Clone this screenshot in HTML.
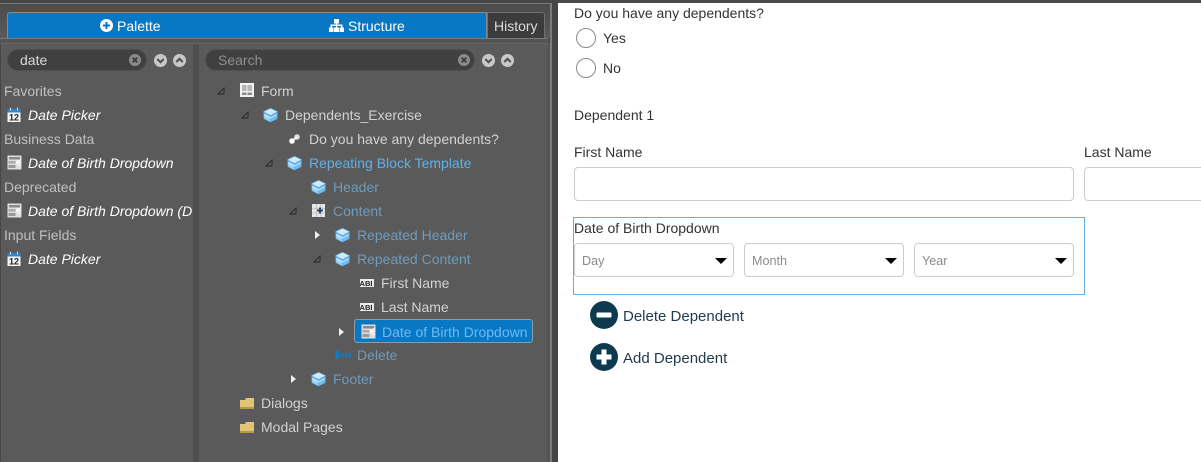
<!DOCTYPE html>
<html><head><meta charset="utf-8">
<style>
html,body{margin:0;padding:0}
body{width:1201px;height:462px;overflow:hidden;position:relative;background:#fff;font-family:"Liberation Sans",Arial,sans-serif;font-size:14px}
.a{position:absolute}
.t{position:absolute;white-space:nowrap;line-height:16px;color:#d2d2d2}
.g{color:#c0c0c0}
.i{color:#fff;font-style:italic}
.b{color:#6f9bbd}
.d{color:#333}
svg{position:absolute;overflow:visible}
.inp{position:absolute;box-sizing:border-box;background:#fff;border:1px solid #ccc;border-radius:4px}
.sel{position:absolute;box-sizing:border-box;width:160px;height:34px;top:243px;background:#fff;border:1px solid #ccc;border-radius:4px;color:#8a8a8a;font-size:12.6px;line-height:34px;padding-left:7px}
.sel i{position:absolute;right:6px;top:14px;width:0;height:0;border-left:6px solid transparent;border-right:6px solid transparent;border-top:6px solid #000}
.s{position:absolute;box-sizing:border-box;height:22px;top:49px;background:#404040;border:1px solid #505050;border-radius:11px;color:#d8d8d8;line-height:20px;padding-left:12px}
.tri{position:absolute;width:0;height:0;border-top:4px solid transparent;border-bottom:4px solid transparent;border-left:5px solid #f0f0f0}
</style></head><body>
<svg width="0" height="0" style="position:absolute"><defs>
<symbol id="cube" viewBox="0 0 16 16"><path d="M8 .5L15.500 4V12L8 15.800L.5 12V4Z" fill="#5fb0ea"/><path d="M8 1.200L14.800 4.500L8 8L1.200 4.500Z" fill="#d3ebfb"/><path d="M1.200 6.500L7.500 9.800V15L1.200 11.600Z" fill="#9ad2f6"/><path d="M8.500 9.800L14.800 6.500V11.600L8.500 15Z" fill="#74bdf0"/><path d="M1.200 7.500L8 11L14.800 7.500" stroke="#e8f5fd" stroke-width=".8" fill="none"/></symbol>
<symbol id="cal" viewBox="0 0 14 15"><rect x=".5" y="2" width="13" height="13" fill="#f4f4f4"/><rect x=".5" y="2" width="13" height="3.500" fill="#2a87cf"/><rect x="3" y=".5" width="1" height="3" fill="#ddd"/><rect x="10" y=".5" width="1" height="3" fill="#ddd"/><text x="7" y="13.500" text-anchor="middle" font-family="Liberation Sans" font-weight="bold" font-size="9" fill="#222">12</text></symbol>
<symbol id="dd" viewBox="0 0 15 15"><rect x=".5" y=".5" width="14" height="14" fill="#dedede"/><rect x="2" y="2" width="11" height="2.500" fill="#8a8a8a"/><rect x="1.500" y="6" width="7" height="2.500" fill="#ababab"/><rect x="1.500" y="10" width="7" height="3" fill="#999"/><path d="M9 7L14 4.500M9 7.500H14M9 8L14 11" stroke="#fff"/></symbol>
<symbol id="abl" viewBox="0 0 14 8"><rect width="14" height="8" fill="#eaeaea"/><text x="6" y="7" text-anchor="middle" font-family="Liberation Sans" font-weight="bold" font-size="7.500" fill="#222">ABI</text></symbol>
<symbol id="folder" viewBox="0 0 15 11"><path d="M0 2H5L6 0H14V11H0Z" fill="#e2c576"/><rect y="9" width="14" height="2" fill="#b8964a"/></symbol>
<symbol id="col" viewBox="0 0 8 8"><path d="M7 1V7H1Z" fill="none" stroke="#2b2b2b" stroke-width="1"/></symbol>
<symbol id="down" viewBox="0 0 13 13"><circle cx="6.500" cy="6.500" r="6.500" fill="#c8c8c8"/><path d="M3.300 5L6.500 8.200L9.700 5" stroke="#505050" stroke-width="2" fill="none"/></symbol>
<symbol id="up" viewBox="0 0 13 13"><circle cx="6.500" cy="6.500" r="6.500" fill="#c8c8c8"/><path d="M3.300 8L6.500 4.800L9.700 8" stroke="#505050" stroke-width="2" fill="none"/></symbol>
<symbol id="x" viewBox="0 0 13 13"><circle cx="6.500" cy="6.500" r="6.500" fill="#8a8a8a"/><path d="M4 4L9 9M9 4L4 9" stroke="#3d3d3d" stroke-width="2"/></symbol>
</defs></svg>

<!-- editor panel background -->
<div class="a" style="left:0;top:0;width:558px;height:462px;background:#464646"></div>
<div class="a" style="left:0;top:4px;width:550px;height:34px;background:linear-gradient(#4b4b4b,#5a5a5a)"></div>
<div class="a" style="left:0;top:3px;width:552px;height:1px;background:#7a7a7a"></div>
<div class="a" style="left:550px;top:3px;width:2px;height:459px;background:#7c7c7c"></div>
<div class="a" style="left:1px;top:43px;width:192px;height:419px;background:#5a5a5a"></div>
<div class="a" style="left:193px;top:43px;width:6px;height:419px;background:#4f4f4f"></div>
<div class="a" style="left:199px;top:43px;width:351px;height:419px;background:#5a5a5a"></div>
<div class="a" style="left:548px;top:38px;width:1px;height:424px;background:#4e4e4e"></div>
<div class="a" style="left:0;top:38px;width:548px;height:6px;background:#555;border-top:1px solid #7a7a7a;border-bottom:1px solid #656565;box-sizing:border-box"></div>

<!-- tabs -->
<div class="a" style="left:7px;top:12px;width:480px;height:26px;background:#0877c4;border:1px solid #8a8a8a;border-bottom:0;box-sizing:border-box;border-radius:3px 0 0 0"></div>
<div class="a" style="left:487px;top:12px;width:58px;height:26px;background:#3c3c3c;border:1px solid #707070;border-bottom:0;box-sizing:border-box;border-radius:0 3px 0 0"></div>
<svg style="left:100px;top:19px" width="13" height="13" viewBox="0 0 13 13"><circle cx="6.500" cy="6.500" r="6.500" fill="#fff"/><path d="M6.500 3V10M3 6.500H10" stroke="#0877c4" stroke-width="2"/></svg>
<div class="t" style="left:117px;top:18px;color:#fff">Palette</div>
<svg style="left:329px;top:19px" width="15" height="13" viewBox="0 0 15 13"><path d="M5 0H10V4.500H8.200V5.500H13.500V8.500H15V13H10.500V8.500H12V7H8.200V8.500H10V13H5V8.500H6.800V7H3V8.500H4.500V13H0V8.500H1.500V5.500H6.800V4.500H5Z" fill="#fff"/></svg>
<div class="t" style="left:348px;top:18px;color:#fff">Structure</div>
<div class="t" style="left:494px;top:18px;color:#dcdcdc">History</div>

<!-- search left -->
<div class="s" style="left:7px;width:140px">date</div>
<svg style="left:129px;top:54px" width="12" height="12"><use href="#x"/></svg>
<svg style="left:154px;top:54px" width="13" height="13"><use href="#down"/></svg>
<svg style="left:173px;top:54px" width="13" height="13"><use href="#up"/></svg>

<!-- search right -->
<div class="s" style="left:205px;width:270px;color:#8f8f8f">Search</div>
<svg style="left:458px;top:54px" width="12" height="12"><use href="#x"/></svg>
<svg style="left:482px;top:54px" width="13" height="13"><use href="#down"/></svg>
<svg style="left:501px;top:54px" width="13" height="13"><use href="#up"/></svg>

<!-- palette list -->
<div class="t g" style="left:4px;top:83px">Favorites</div>
<svg style="left:7px;top:107px" width="14" height="15"><use href="#cal"/></svg>
<div class="t i" style="left:28px;top:107px">Date Picker</div>
<div class="t g" style="left:4px;top:131px">Business Data</div>
<svg style="left:7px;top:155px" width="15" height="15"><use href="#dd"/></svg>
<div class="t i" style="left:28px;top:155px">Date of Birth Dropdown</div>
<div class="t g" style="left:4px;top:179px">Deprecated</div>
<svg style="left:7px;top:203px" width="15" height="15"><use href="#dd"/></svg>
<div class="t i" style="left:28px;top:203px;width:164px;overflow:hidden">Date of Birth Dropdown (Deprecated)</div>
<div class="t g" style="left:4px;top:227px">Input Fields</div>
<svg style="left:7px;top:251px" width="14" height="15"><use href="#cal"/></svg>
<div class="t i" style="left:28px;top:251px">Date Picker</div>

<!-- tree -->
<svg style="left:217px;top:87px" width="8" height="8"><use href="#col"/></svg>
<svg style="left:240px;top:83px" width="14" height="14" viewBox="0 0 14 14"><rect width="14" height="14" fill="#f2f2f2"/><rect x="2" y="2" width="4.500" height="6" fill="#b5b5b5"/><rect x="7.500" y="2" width="4.500" height="6" fill="#b5b5b5"/><rect x="2" y="9.500" width="4.500" height="2.500" fill="#8a8a8a"/><rect x="7.500" y="9.500" width="4.500" height="2.500" fill="#8a8a8a"/></svg>
<div class="t" style="left:261px;top:83px">Form</div>

<svg style="left:241px;top:111px" width="8" height="8"><use href="#col"/></svg>
<svg style="left:263px;top:107px" width="15" height="16"><use href="#cube"/></svg>
<div class="t" style="left:285px;top:107px">Dependents_Exercise</div>

<svg style="left:289px;top:134px" width="11" height="10" viewBox="0 0 11 10"><circle cx="3" cy="7" r="2.800" fill="#fff"/><circle cx="8" cy="3" r="2.800" fill="#ddd"/><path d="M3 7L8 3" stroke="#fff" stroke-width="1.500"/></svg>
<div class="t" style="left:309px;top:131px">Do you have any dependents?</div>

<svg style="left:265px;top:159px" width="8" height="8"><use href="#col"/></svg>
<svg style="left:287px;top:155px" width="15" height="16"><use href="#cube"/></svg>
<div class="t" style="left:309px;top:155px;color:#5db1ea">Repeating Block Template</div>

<svg style="left:311px;top:179px" width="15" height="16"><use href="#cube"/></svg>
<div class="t b" style="left:333px;top:179px">Header</div>

<svg style="left:289px;top:207px" width="8" height="8"><use href="#col"/></svg>
<svg style="left:312px;top:204px" width="13" height="13" viewBox="0 0 13 13"><rect width="13" height="13" fill="#e6e6e6"/><path d="M4.500 0V13M0 4.500H13M0 9H13M9 0V13" stroke="#bbb" stroke-width=".8"/><path d="M5 6.500H11M8 3.500V9.500" stroke="#173e6b" stroke-width="1.800"/></svg>
<div class="t b" style="left:333px;top:203px">Content</div>

<div class="tri" style="left:315px;top:231px"></div>
<svg style="left:335px;top:227px" width="15" height="16"><use href="#cube"/></svg>
<div class="t b" style="left:357px;top:227px">Repeated Header</div>

<svg style="left:313px;top:255px" width="8" height="8"><use href="#col"/></svg>
<svg style="left:335px;top:251px" width="15" height="16"><use href="#cube"/></svg>
<div class="t b" style="left:357px;top:251px">Repeated Content</div>

<svg style="left:360px;top:279px" width="14" height="8"><use href="#abl"/></svg>
<div class="t" style="left:381px;top:275px">First Name</div>
<svg style="left:360px;top:303px" width="14" height="8"><use href="#abl"/></svg>
<div class="t" style="left:381px;top:299px">Last Name</div>

<div class="tri" style="left:339px;top:328px"></div>
<div class="a" style="left:354px;top:319px;width:179px;height:24px;box-sizing:border-box;background:#0877c4;border:1px solid #8f9aa3;border-radius:3px"></div>
<svg style="left:361px;top:324px" width="15" height="15"><use href="#dd"/></svg>
<div class="t" style="left:382px;top:324px;color:#6cbcf2">Date of Birth Dropdown</div>

<svg style="left:335px;top:351px" width="16" height="8" viewBox="0 0 16 8"><path d="M1 0H4L3 8H0Z" fill="#0a7fd0"/><rect x="5" y="2" width="11" height="4.500" fill="#0a7fd0" opacity=".75"/><path d="M7 2V6.500M10 2V6.500M13 2V6.500" stroke="#5a5a5a"/></svg>
<div class="t b" style="left:357px;top:347px">Delete</div>

<div class="tri" style="left:291px;top:375px"></div>
<svg style="left:311px;top:371px" width="15" height="16"><use href="#cube"/></svg>
<div class="t b" style="left:333px;top:371px">Footer</div>

<svg style="left:240px;top:398px" width="15" height="11"><use href="#folder"/></svg>
<div class="t" style="left:261px;top:395px">Dialogs</div>
<svg style="left:240px;top:422px" width="15" height="11"><use href="#folder"/></svg>
<div class="t" style="left:261px;top:419px">Modal Pages</div>

<!-- form -->
<div class="a" style="left:558px;top:0;width:643px;height:3px;background:#4a4a4a"></div>
<div class="t d" style="left:574px;top:5px">Do you have any dependents?</div>
<div class="a" style="left:576px;top:28px;width:20px;height:20px;box-sizing:border-box;border:1px solid #8c8c8c;border-radius:50%"></div>
<div class="t d" style="left:603px;top:30px">Yes</div>
<div class="a" style="left:576px;top:58px;width:20px;height:20px;box-sizing:border-box;border:1px solid #8c8c8c;border-radius:50%"></div>
<div class="t d" style="left:603px;top:60px">No</div>
<div class="t d" style="left:574px;top:107px">Dependent 1</div>
<div class="t d" style="left:574px;top:144px">First Name</div>
<div class="inp" style="left:574px;top:167px;width:500px;height:34px"></div>
<div class="t d" style="left:1084px;top:144px">Last Name</div>
<div class="inp" style="left:1084px;top:167px;width:140px;height:34px"></div>

<div class="a" style="left:573px;top:217px;width:512px;height:78px;box-sizing:border-box;border:1px solid #66aee0"></div>
<div class="t d" style="left:574px;top:220px">Date of Birth Dropdown</div>
<div class="sel" style="left:574px">Day<i></i></div>
<div class="sel" style="left:744px">Month<i></i></div>
<div class="sel" style="left:914px">Year<i></i></div>

<svg style="left:590px;top:301px" width="28" height="28" viewBox="0 0 28 28"><circle cx="14" cy="14" r="14" fill="#0e3a50"/><rect x="6.500" y="11.500" width="15" height="5" rx="1" fill="#fff"/></svg>
<div class="t" style="left:623px;top:310px;color:#1f3a4d;font-size:15px;line-height:14px">Delete Dependent</div>
<svg style="left:590px;top:343px" width="28" height="28" viewBox="0 0 28 28"><circle cx="14" cy="14" r="14" fill="#0e3a50"/><path d="M11.500 6.500H16.500V11.500H21.500V16.500H16.500V21.500H11.500V16.500H6.500V11.500H11.500Z" fill="#fff"/></svg>
<div class="t" style="left:623px;top:352px;color:#1f3a4d;font-size:15px;line-height:14px">Add Dependent</div>
</body></html>
